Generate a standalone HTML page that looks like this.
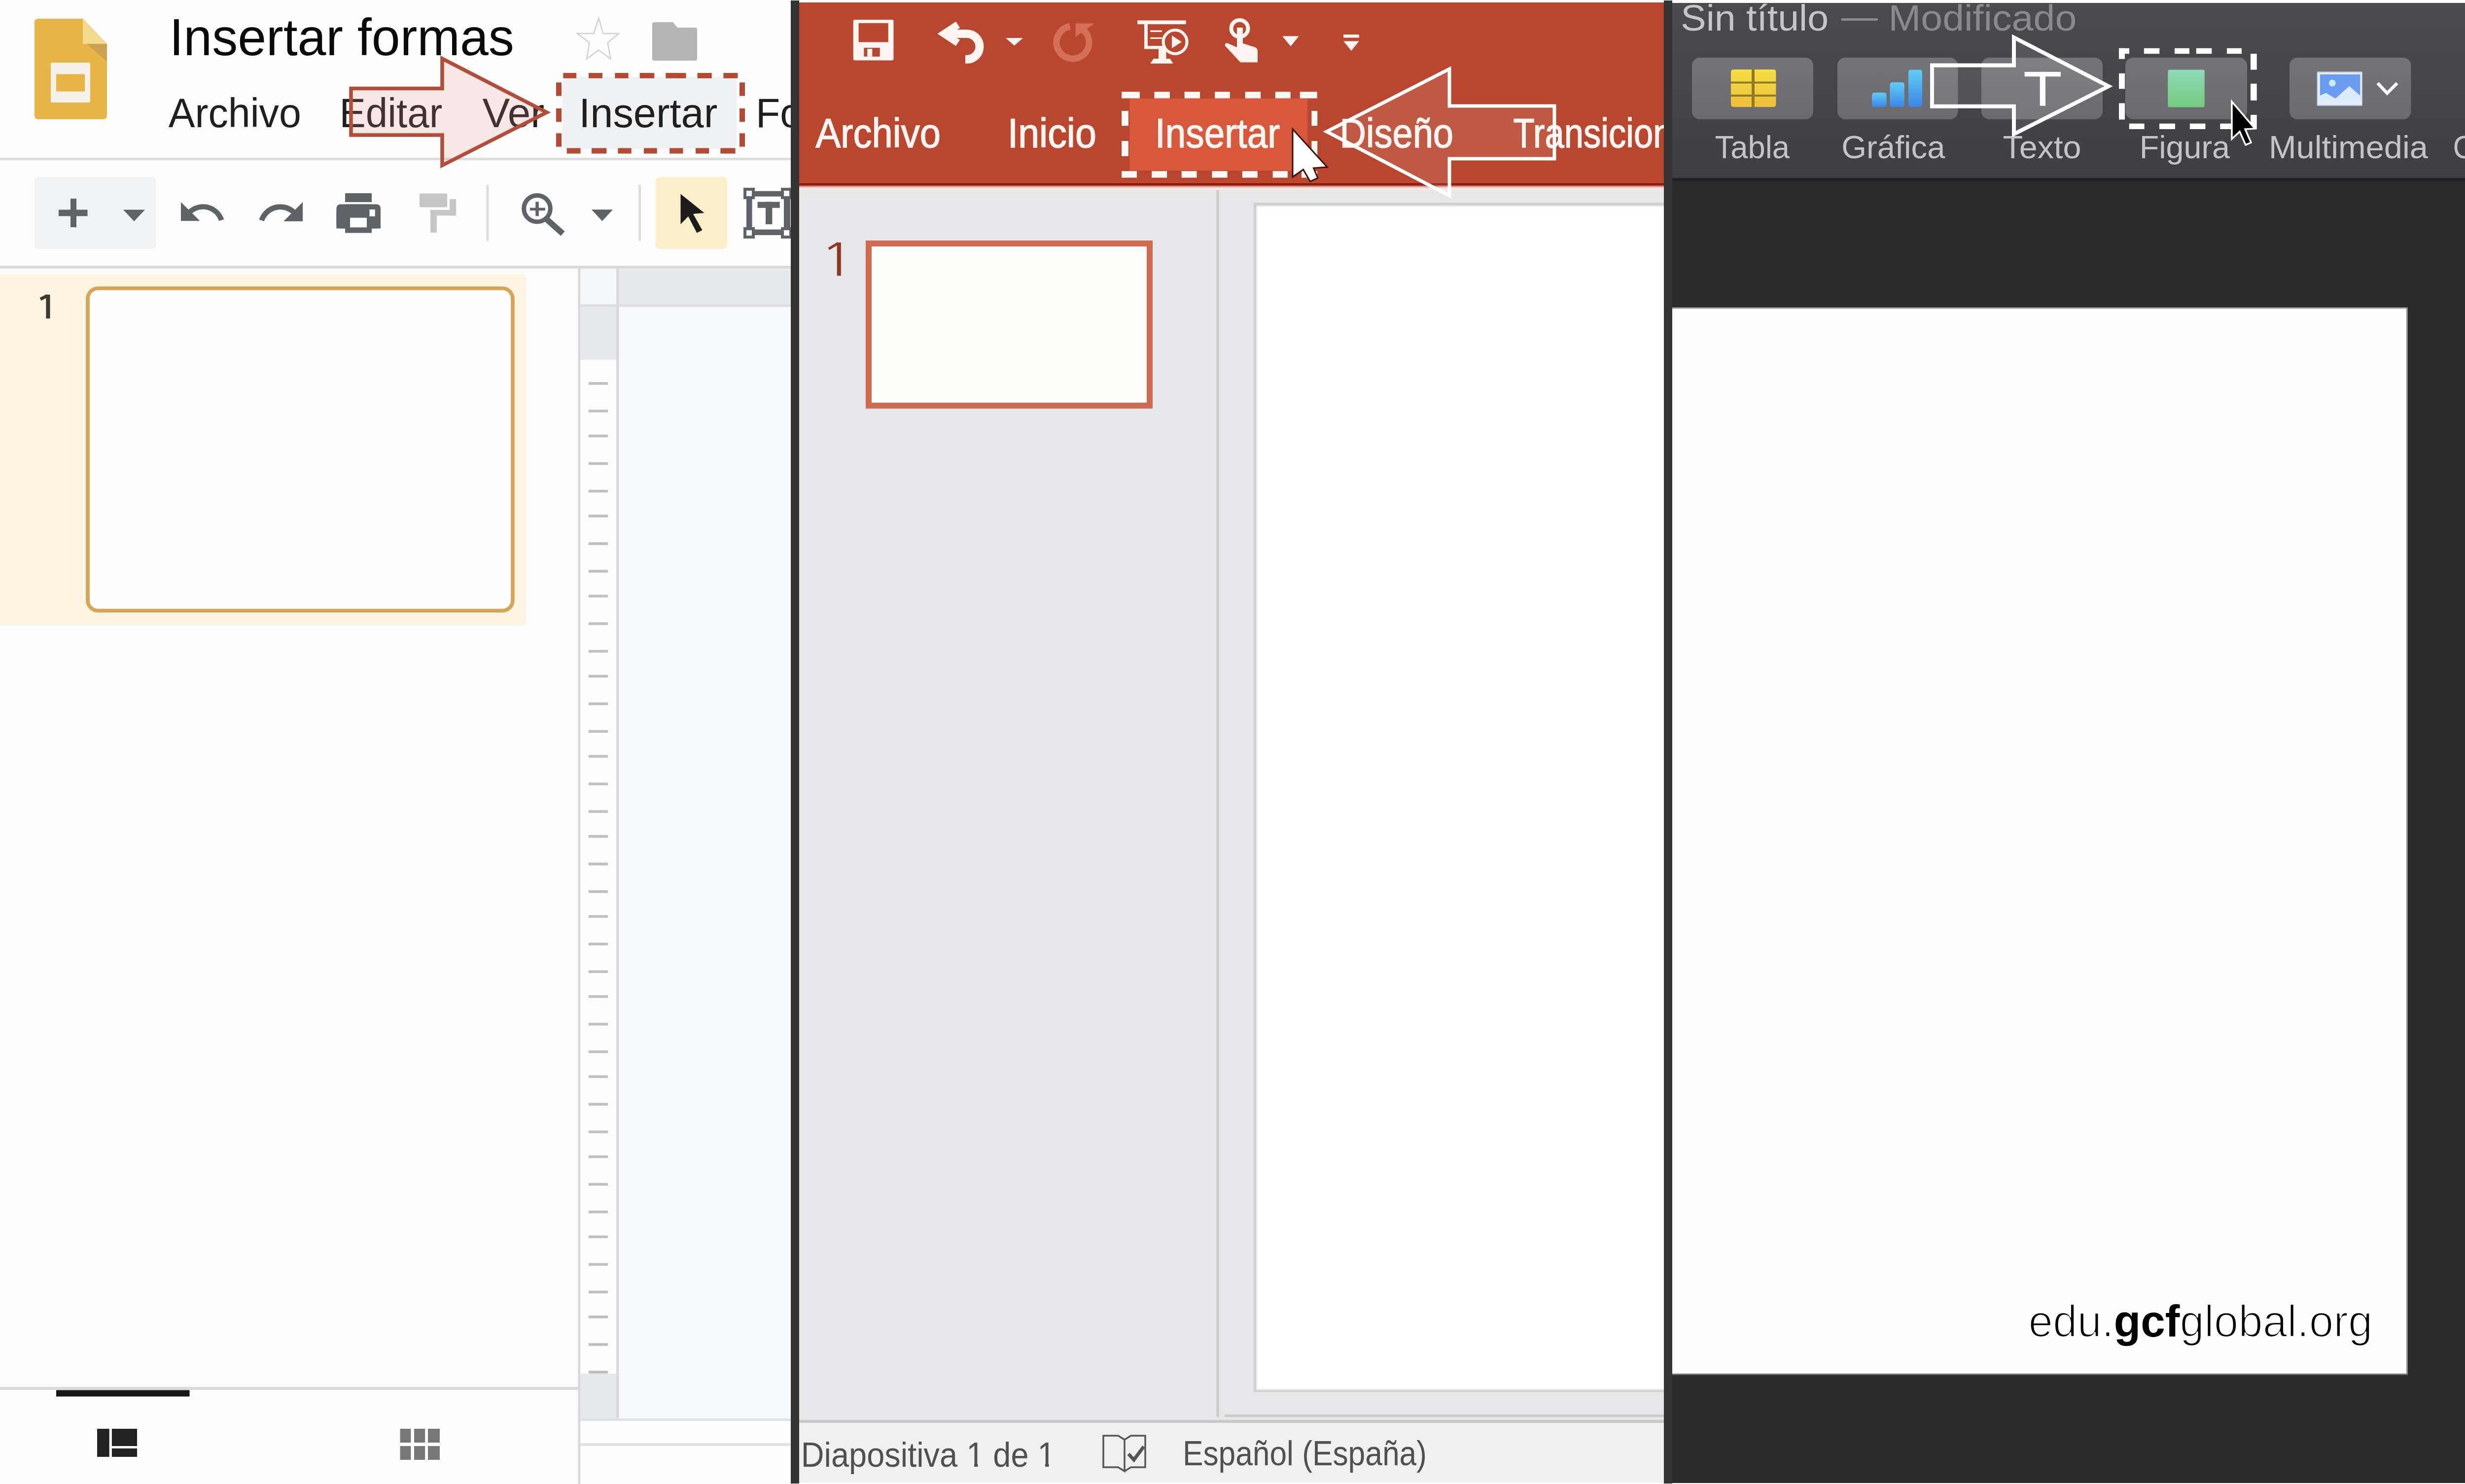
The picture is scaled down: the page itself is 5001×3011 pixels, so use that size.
<!DOCTYPE html>
<html><head><meta charset="utf-8"><style>
html,body{margin:0;padding:0;background:#FDFDFD;overflow:hidden;}
svg{display:block;font-family:"Liberation Sans", sans-serif;}
</style></head><body>
<svg width="5001" height="3011" viewBox="0 0 5001 3011">
<rect x="0" y="0" width="1604" height="3011" fill="#FDFDFD" />
<path d="M78,38 H168 L217,89 V234 Q217,242 209,242 H78 Q70,242 70,234 V46 Q70,38 78,38 Z" fill="#E8B646" />
<polygon points="168,38 217,89 168,89" fill="#F1DA8E" />
<polygon points="176,89 217,89 217,126" fill="#CDA250" />
<rect x="103" y="127" width="80" height="81" fill="#F5F1E8" rx="3" />
<rect x="114" y="150.5" width="58" height="35.0" fill="#E8B646" />
<text x="343.4" y="112" font-size="106" fill="#0A0A0A" font-weight="normal" textLength="699.4" lengthAdjust="spacingAndGlyphs" >Insertar formas</text>
<polygon points="1214.5,37 1223.3,68 1255,68 1232.6,86.5 1238.5,119.5 1214.5,101.5 1190,119.5 1195.5,86.5 1171,68 1204.4,68" fill="none" stroke="#D2D2D2" stroke-width="2.6" stroke-linejoin="miter"/>
<path d="M1327,45 H1365 L1374,56 H1410 Q1414,56 1414,60 V119 Q1414,123 1410,123 H1327 Q1323,123 1323,119 V49 Q1323,45 1327,45 Z" fill="#B5B5B5" />
<rect x="1141" y="156" width="353.6" height="146.5" fill="#F0F1F3" rx="12" />
<text x="341.8" y="258" font-size="84.3" fill="#1F1F1F" font-weight="normal" textLength="269.0" lengthAdjust="spacingAndGlyphs" >Archivo</text>
<text x="688.4" y="258" font-size="84.3" fill="#1F1F1F" font-weight="normal" textLength="208.9" lengthAdjust="spacingAndGlyphs" >Editar</text>
<text x="1174.3" y="258" font-size="84.3" fill="#1F1F1F" font-weight="normal" textLength="281.0" lengthAdjust="spacingAndGlyphs" >Insertar</text>
<text x="978.6" y="258" font-size="84.3" fill="#1F1F1F" font-weight="normal" textLength="125.6" lengthAdjust="spacingAndGlyphs" >Ver</text>
<text x="1532.9" y="258" font-size="84.3" fill="#1F1F1F" font-weight="normal" textLength="300.4" lengthAdjust="spacingAndGlyphs" >Formato</text>
<rect x="0" y="320" width="1604" height="5" fill="#DCDCDF" />
<polygon points="712,179.5 897,179.5 897,119 1109,228 897,335.5 897,274 712,274" fill="rgba(220,140,125,0.18)" stroke="#B14E39" stroke-width="7.5" stroke-linejoin="miter"/>
<rect x="1142.4" y="148" width="26.7" height="10.8" fill="#B44A34" />
<rect x="1194" y="148" width="28" height="10.8" fill="#B44A34" />
<rect x="1247.3" y="148" width="27.3" height="10.8" fill="#B44A34" />
<rect x="1297.7" y="148" width="29.6" height="10.8" fill="#B44A34" />
<rect x="1350.3" y="148" width="41.3" height="10.8" fill="#B44A34" />
<rect x="1414.6" y="148" width="29.1" height="10.8" fill="#B44A34" />
<rect x="1467.4" y="148" width="29.1" height="10.8" fill="#B44A34" />
<rect x="1149.7" y="300.5" width="27.9" height="11.1" fill="#B44A34" />
<rect x="1200" y="300.5" width="30.4" height="11.1" fill="#B44A34" />
<rect x="1253.4" y="300.5" width="27.3" height="11.1" fill="#B44A34" />
<rect x="1306" y="300.5" width="26.7" height="11.1" fill="#B44A34" />
<rect x="1358.2" y="300.5" width="27.3" height="11.1" fill="#B44A34" />
<rect x="1411" y="300.5" width="27.3" height="11.1" fill="#B44A34" />
<rect x="1461.3" y="300.5" width="30.3" height="11.1" fill="#B44A34" />
<rect x="1128" y="167.3" width="11" height="27.3" fill="#B44A34" />
<rect x="1500" y="167.3" width="11" height="27.3" fill="#B44A34" />
<rect x="1128" y="220" width="11" height="27.3" fill="#B44A34" />
<rect x="1500" y="220" width="11" height="27.3" fill="#B44A34" />
<rect x="1128" y="270.4" width="11" height="27.3" fill="#B44A34" />
<rect x="1500" y="270.4" width="11" height="27.3" fill="#B44A34" />
<rect x="70" y="359" width="246" height="146" fill="#F0F2F4" rx="7" />
<rect x="143" y="403" width="12" height="58" fill="#5F6368" />
<rect x="119" y="425.5" width="58.5" height="13.0" fill="#5F6368" />
<polygon points="250,425.5 294,425.5 272,449" fill="#5F6368" />
<g transform="translate(358.4,380) scale(4.27)"><path d="M12.5 8c-2.65 0-5.05.99-6.9 2.6L2 7v9h9l-3.62-3.62c1.39-1.16 3.16-1.88 5.12-1.88 3.54 0 6.55 2.31 7.6 5.5l2.37-.78C21.08 11.03 17.15 8 12.5 8z" fill="#5F6368"/></g>
<g transform="translate(518.9,379.7) scale(4.33)"><path d="M18.4 10.6C16.55 8.99 14.15 8 11.5 8c-4.65 0-8.58 3.03-9.960 7.22L3.9 16c1.05-3.19 4.05-5.5 7.6-5.5 1.95 0 3.730.72 5.12 1.88L13 16h9V7l-3.6 3.6z" fill="#5F6368"/></g>
<rect x="682.4" y="414.5" width="89.6" height="49.0" fill="#5F6368" rx="8" />
<rect x="682.4" y="430" width="89.6" height="33.5" fill="#5F6368" />
<rect x="700" y="414.5" width="54" height="58.1" fill="#5F6368" />
<rect x="700" y="392" width="54" height="18" fill="#5F6368" />
<rect x="710" y="441.8" width="34" height="19.6" fill="#FDFDFD" />
<rect x="749.5" y="425" width="11.2" height="14" fill="#FDFDFD" />
<rect x="912" y="404" width="13" height="33.4" fill="#C6C6C6" />
<rect x="873" y="426" width="52" height="11.4" fill="#C6C6C6" />
<rect x="873" y="426" width="13" height="46" fill="#C6C6C6" />
<rect x="851" y="392.6" width="56.2" height="28.0" fill="#C6C6C6" rx="3" />
<rect x="907.2" y="404" width="4.8" height="22" fill="#FDFDFD" />
<rect x="986.5" y="375" width="5.0" height="113.7" fill="#DADCE0" />
<rect x="1295" y="375" width="5" height="113.7" fill="#DADCE0" />
<circle cx="1089.5" cy="423.2" r="26.8" fill="none" stroke="#5F6368" stroke-width="9"/>
<rect x="1075" y="421.6" width="30.8" height="5.6" fill="#5F6368" />
<rect x="1086.3" y="409.4" width="6.5" height="29.0" fill="#5F6368" />
<line x1="1110" y1="446" x2="1137" y2="470" stroke="#5F6368" stroke-width="12" stroke-linecap="square"/>
<polygon points="1200,425.3 1243,425.3 1221.5,448.6" fill="#5F6368" />
<rect x="1330" y="359" width="144.5" height="146" fill="#FBEFCA" rx="8" />
<polygon points="1380.5,393.5 1428.5,432 1406,434 1424.5,467 1413.5,472.5 1396,439 1380.5,455" fill="#1C1C1C" />
<rect x="1514" y="387.7" width="89" height="11.0" fill="#5F6368" />
<rect x="1514" y="465.6" width="89" height="11.4" fill="#5F6368" />
<rect x="1514" y="387.7" width="11.6" height="89.3" fill="#5F6368" />
<rect x="1590" y="387.7" width="13" height="89.3" fill="#5F6368" />
<rect x="1508" y="381" width="23" height="23" fill="#5F6368" />
<rect x="1514" y="387" width="11" height="11" fill="#FDFDFD" />
<rect x="1508" y="461" width="23" height="23" fill="#5F6368" />
<rect x="1514" y="467" width="11" height="11" fill="#FDFDFD" />
<rect x="1584" y="381" width="23" height="23" fill="#5F6368" />
<rect x="1590" y="387" width="11" height="11" fill="#FDFDFD" />
<rect x="1584" y="461" width="23" height="23" fill="#5F6368" />
<rect x="1590" y="467" width="11" height="11" fill="#FDFDFD" />
<rect x="1536.6" y="409.6" width="45.1" height="12.2" fill="#5F6368" />
<rect x="1553" y="409.6" width="13.4" height="45.4" fill="#5F6368" />
<rect x="0" y="539" width="1604" height="6" fill="#DADADD" />
<path d="M0,556 H1056 Q1068,556 1068,568 V1257 Q1068,1269 1056,1269 H0 Z" fill="#FDF5E1" />
<rect x="178" y="585" width="862" height="654" rx="21" fill="#FEFEFE" stroke="#D4A658" stroke-width="7.7"/>
<rect x="93.4" y="597.8" width="8.1" height="48.5" fill="#3E3A30" />
<path d="M82,607 L96,600" stroke="#3E3A30" stroke-width="6.5" fill="none"/>
<rect x="1172.4" y="545" width="5.2" height="2466" fill="#D8D8DA" />
<rect x="1177.6" y="545" width="72.4" height="2335" fill="#FEFEFE" />
<rect x="1177.6" y="545" width="72.4" height="72.5" fill="#F6F7F9" />
<rect x="1177.6" y="622.7" width="72.4" height="107.3" fill="#E7E8EB" />
<rect x="1177.6" y="2787" width="72.4" height="91" fill="#E7E8EB" />
<rect x="1250" y="545" width="5.7" height="2333" fill="#D9D9DC" />
<rect x="1255.7" y="545" width="348.3" height="72.5" fill="#E8E9EC" />
<rect x="1177.6" y="617.5" width="426.4" height="5.2" fill="#DCDCDE" />
<rect x="1255.7" y="622.7" width="348.3" height="2255.3" fill="#F8F9FA" />
<rect x="1193.8" y="775.2" width="39.2" height="5.6" fill="#BFC0C1" />
<rect x="1193.8" y="831.2" width="39.2" height="5.6" fill="#BFC0C1" />
<rect x="1193.8" y="881.7" width="39.2" height="5.6" fill="#BFC0C1" />
<rect x="1193.8" y="937.7" width="39.2" height="5.6" fill="#BFC0C1" />
<rect x="1193.8" y="993.7" width="39.2" height="5.6" fill="#BFC0C1" />
<rect x="1193.8" y="1044.2" width="39.2" height="5.6" fill="#BFC0C1" />
<rect x="1193.8" y="1100.2" width="39.2" height="5.6" fill="#BFC0C1" />
<rect x="1193.8" y="1156.2" width="39.2" height="5.6" fill="#BFC0C1" />
<rect x="1193.8" y="1206.7" width="39.2" height="5.6" fill="#BFC0C1" />
<rect x="1193.8" y="1262.7" width="39.2" height="5.6" fill="#BFC0C1" />
<rect x="1193.8" y="1318.7" width="39.2" height="5.6" fill="#BFC0C1" />
<rect x="1193.8" y="1369.2" width="39.2" height="5.6" fill="#BFC0C1" />
<rect x="1193.8" y="1425.2" width="39.2" height="5.6" fill="#BFC0C1" />
<rect x="1193.8" y="1481.2" width="39.2" height="5.6" fill="#BFC0C1" />
<rect x="1193.8" y="1531.7" width="39.2" height="5.6" fill="#BFC0C1" />
<rect x="1193.8" y="1587.7" width="39.2" height="5.6" fill="#BFC0C1" />
<rect x="1193.8" y="1643.7" width="39.2" height="5.6" fill="#BFC0C1" />
<rect x="1193.8" y="1694.2" width="39.2" height="5.6" fill="#BFC0C1" />
<rect x="1193.8" y="1750.2" width="39.2" height="5.6" fill="#BFC0C1" />
<rect x="1193.8" y="1806.2" width="39.2" height="5.6" fill="#BFC0C1" />
<rect x="1193.8" y="1856.7" width="39.2" height="5.6" fill="#BFC0C1" />
<rect x="1193.8" y="1912.7" width="39.2" height="5.6" fill="#BFC0C1" />
<rect x="1193.8" y="1968.7" width="39.2" height="5.6" fill="#BFC0C1" />
<rect x="1193.8" y="2019.2" width="39.2" height="5.6" fill="#BFC0C1" />
<rect x="1193.8" y="2075.2" width="39.2" height="5.6" fill="#BFC0C1" />
<rect x="1193.8" y="2131.2" width="39.2" height="5.6" fill="#BFC0C1" />
<rect x="1193.8" y="2181.7" width="39.2" height="5.6" fill="#BFC0C1" />
<rect x="1193.8" y="2237.7" width="39.2" height="5.6" fill="#BFC0C1" />
<rect x="1193.8" y="2293.7" width="39.2" height="5.6" fill="#BFC0C1" />
<rect x="1193.8" y="2344.2" width="39.2" height="5.6" fill="#BFC0C1" />
<rect x="1193.8" y="2400.2" width="39.2" height="5.6" fill="#BFC0C1" />
<rect x="1193.8" y="2456.2" width="39.2" height="5.6" fill="#BFC0C1" />
<rect x="1193.8" y="2506.7" width="39.2" height="5.6" fill="#BFC0C1" />
<rect x="1193.8" y="2562.7" width="39.2" height="5.6" fill="#BFC0C1" />
<rect x="1193.8" y="2618.7" width="39.2" height="5.6" fill="#BFC0C1" />
<rect x="1193.8" y="2669.2" width="39.2" height="5.6" fill="#BFC0C1" />
<rect x="1193.8" y="2725.2" width="39.2" height="5.6" fill="#BFC0C1" />
<rect x="1193.8" y="2781.2" width="39.2" height="5.6" fill="#BFC0C1" />
<rect x="0" y="2814" width="1172" height="6" fill="#D9D9D9" />
<rect x="114" y="2820.5" width="270.5" height="13.0" fill="#151515" />
<rect x="197" y="2899" width="24.7" height="56.9" fill="#222222" />
<rect x="226.9" y="2899" width="51.1" height="35" fill="#222222" />
<rect x="226.9" y="2938.8" width="51.1" height="17.1" fill="#222222" />
<rect x="811.6" y="2899" width="21.7" height="28" fill="#777777" />
<rect x="811.6" y="2934" width="21.7" height="28" fill="#777777" />
<rect x="840" y="2899" width="22.2" height="28" fill="#777777" />
<rect x="840" y="2934" width="22.2" height="28" fill="#777777" />
<rect x="868" y="2899" width="24" height="28" fill="#777777" />
<rect x="868" y="2934" width="24" height="28" fill="#777777" />
<rect x="1177.6" y="2878" width="426.4" height="5.3" fill="#E0E1E2" />
<rect x="1177.6" y="2927.8" width="426.4" height="6.1" fill="#E2E2E2" />
<rect x="1177.6" y="2883.3" width="426.4" height="44.5" fill="#FEFEFE" />
<rect x="1177.6" y="2933.9" width="426.4" height="77.1" fill="#FEFEFE" />
<rect x="1604" y="1" width="17" height="3009" fill="#333333" />
<rect x="1621" y="0" width="1754" height="3011" fill="#FDFDFD" />
<rect x="1621" y="5" width="1754" height="367" fill="#B9472F" />
<rect x="1621" y="367" width="1754" height="5" fill="#C14629" />
<rect x="1621" y="378" width="1754" height="2506" fill="#E7E6E8" />
<rect x="1621" y="372" width="1754" height="3" fill="#841203" />
<rect x="1621" y="375" width="1754" height="3" fill="#A84F48" />
<rect x="1621" y="378" width="1754" height="3" fill="#F0B8B0" />
<rect x="1621" y="381" width="1754" height="3" fill="#FBE6E2" />
<rect x="1621" y="384" width="1754" height="4" fill="#EEE7E7" />
<rect x="1621" y="2881" width="1754" height="6" fill="#C9C9C9" />
<rect x="1621" y="2887" width="1754" height="121" fill="#F0F0F0" />
<rect x="1730.8" y="40" width="81.7" height="82.5" fill="#FFF4EF" rx="3" />
<rect x="1741.6" y="47" width="60.1" height="38.5" fill="#B9472F" />
<rect x="1752.4" y="97" width="32.3" height="17.8" fill="#B9472F" />
<rect x="1759.3" y="99" width="10.0" height="15.8" fill="#FFF4EF" />
<path d="M1925,68.5 H1961 A26,26 0 0 1 1961,120.5 H1958" fill="none" stroke="#FFF4EF" stroke-width="17"/>
<path d="M1943,50 L1915,68.5 L1943,87" fill="none" stroke="#FFF4EF" stroke-width="15" stroke-linejoin="miter" stroke-miterlimit="10"/>
<polygon points="2039.7,77 2075.2,77 2057.5,92.4" fill="#FFF4EF" />
<path d="M2170.3,53.5 A33,33 0 1 0 2197.2,60.7" fill="none" stroke="#D66F58" stroke-width="13"/>
<polygon points="2181.5,47.4 2220,47.4 2181.5,75" fill="#D66F58" />
<rect x="2307" y="41.4" width="98.7" height="7.8" fill="#FFF4EF" />
<rect x="2321" y="49" width="7" height="50" fill="#FFF4EF" />
<rect x="2321" y="93" width="41" height="6.5" fill="#FFF4EF" />
<rect x="2333" y="61.5" width="24" height="3.5" fill="#FFF4EF" />
<rect x="2333" y="75.8" width="24" height="3.2" fill="#FFF4EF" />
<circle cx="2383.6" cy="85" r="24" fill="none" stroke="#FFF4EF" stroke-width="6"/>
<polygon points="2377,72 2377,98 2397,85" fill="#FFF4EF" />
<rect x="2350" y="99" width="15.5" height="20" fill="#FFF4EF" />
<polygon points="2340,119 2373,119 2380,129 2333,129" fill="#FFF4EF" />
<circle cx="2514.5" cy="57.7" r="17" fill="none" stroke="#FFF4EF" stroke-width="8"/>
<path d="M2509,56 H2521 V88 L2546,96 Q2551,98 2551,104 V126.5 H2516 L2485,93 Q2483,87.5 2490,87.5 L2509,96 Z" fill="#FFF4EF" />
<polygon points="2601,73.2 2634.7,73.2 2618,94" fill="#FFF4EF" />
<rect x="2725" y="70" width="31.7" height="6.5" fill="#FFF4EF" />
<polygon points="2725,83.6 2756.7,83.6 2741,103" fill="#FFF4EF" />
<rect x="2291" y="200" width="361" height="146" fill="#D8583C" />
<text x="1654.6" y="299" font-size="84.3" fill="#FFF4EF" font-weight="normal" textLength="253.4" lengthAdjust="spacingAndGlyphs" stroke="#FFF4EF" stroke-width="1.6">Archivo</text>
<text x="2043.7" y="299" font-size="84.3" fill="#FFF4EF" font-weight="normal" textLength="180.2" lengthAdjust="spacingAndGlyphs" stroke="#FFF4EF" stroke-width="1.6">Inicio</text>
<text x="2343.1" y="299" font-size="84.3" fill="#FFF4EF" font-weight="normal" textLength="253.1" lengthAdjust="spacingAndGlyphs" stroke="#FFF4EF" stroke-width="1.6">Insertar</text>
<text x="2717.4" y="299" font-size="84.3" fill="#FFF4EF" font-weight="normal" textLength="230.7" lengthAdjust="spacingAndGlyphs" stroke="#FFF4EF" stroke-width="1.6">Diseño</text>
<text x="3069.4" y="299" font-size="84.3" fill="#FFF4EF" font-weight="normal" textLength="397.6" lengthAdjust="spacingAndGlyphs" stroke="#FFF4EF" stroke-width="1.6">Transiciones</text>
<rect x="2275.1" y="186.2" width="36.8" height="13.3" fill="#FFF8F5" />
<rect x="2341.5" y="186.2" width="31.5" height="13.3" fill="#FFF8F5" />
<rect x="2402.6" y="186.2" width="31.5" height="13.3" fill="#FFF8F5" />
<rect x="2464.3" y="186.2" width="30.5" height="13.3" fill="#FFF8F5" />
<rect x="2525.7" y="186.2" width="31.5" height="13.3" fill="#FFF8F5" />
<rect x="2586.8" y="186.2" width="30.9" height="13.3" fill="#FFF8F5" />
<rect x="2636.7" y="186.2" width="34.9" height="13.3" fill="#FFF8F5" />
<rect x="2275.1" y="347.1" width="30.9" height="13.4" fill="#FFF8F5" />
<rect x="2336.2" y="347.1" width="30.9" height="13.4" fill="#FFF8F5" />
<rect x="2396.7" y="347.1" width="30.8" height="13.4" fill="#FFF8F5" />
<rect x="2458.4" y="347.1" width="31.2" height="13.4" fill="#FFF8F5" />
<rect x="2519.8" y="347.1" width="30.9" height="13.4" fill="#FFF8F5" />
<rect x="2581.6" y="347.1" width="30.2" height="13.4" fill="#FFF8F5" />
<rect x="2640" y="347.1" width="32" height="13.4" fill="#FFF8F5" />
<rect x="2275.1" y="225" width="13.8" height="30.2" fill="#FFF8F5" />
<rect x="2660.4" y="225" width="11.8" height="30.2" fill="#FFF8F5" />
<rect x="2275.1" y="286" width="13.8" height="31" fill="#FFF8F5" />
<rect x="2660.4" y="286" width="11.8" height="31" fill="#FFF8F5" />
<polygon points="2691,267 2940,140 2940,215 3153,215 3153,322 2940,322 2940,397" fill="rgba(255,255,255,0.10)" stroke="#FFFFFF" stroke-width="7" stroke-linejoin="miter"/>
<polygon points="2622,262 2622,359 2643.5,344 2657.5,368 2673,361 2664.5,341 2692,339" fill="#FFFFFF" stroke="#3A1208" stroke-width="3"/>
<rect x="1762" y="494" width="570" height="329" fill="#FEFEFD" stroke="#D06B52" stroke-width="12"/>
<rect x="1697.7" y="492" width="8.1" height="67.5" fill="#8A3A26" />
<path d="M1681,505 L1700,493.5" stroke="#8A3A26" stroke-width="5.5" fill="none"/>
<rect x="2467.3" y="386" width="5.2" height="2488.6" fill="#CBCBCB" />
<rect x="2543" y="411" width="832" height="2413.5" fill="#D0D0D0" />
<rect x="2548" y="417" width="827" height="2403.5" fill="#EEEEEE" />
<rect x="2550.5" y="420" width="824.5" height="2397.5" fill="#FFFFFF" />
<rect x="2484" y="2870" width="891" height="5" fill="#CACACA" />
<text x="1624.7" y="2976" font-size="71" fill="#505050" font-weight="normal" textLength="516.0" lengthAdjust="spacingAndGlyphs" >Diapositiva 1 de 1</text>
<rect x="1964" y="2969.5" width="12" height="7.0" fill="#F0F0F0" />
<rect x="1983.5" y="2969.5" width="10.5" height="7.0" fill="#F0F0F0" />
<rect x="2108" y="2969.5" width="12" height="7.0" fill="#F0F0F0" />
<rect x="2127.5" y="2969.5" width="10.5" height="7.0" fill="#F0F0F0" />
<text x="2398.9" y="2973" font-size="71" fill="#505050" font-weight="normal" textLength="495.0" lengthAdjust="spacingAndGlyphs" >Español (España)</text>
<path d="M2238,2913 H2268 L2281,2921 V2985 L2268,2977 H2238 Z M2281,2921 L2294,2913 H2323 V2977 H2294 L2281,2985" fill="none" stroke="#555" stroke-width="3.5"/>
<path d="M2289,2950 L2300,2962 L2320,2935" fill="none" stroke="#555" stroke-width="7"/>
<rect x="3375" y="1" width="17" height="3009" fill="#333333" />
<rect x="3392" y="0" width="1609" height="3011" fill="#FDFDFD" />
<defs><linearGradient id="khdr" x1="0" y1="0" x2="0" y2="1"><stop offset="0" stop-color="#4B4A4E"/><stop offset="1" stop-color="#3F3E42"/></linearGradient><linearGradient id="kbtn" x1="0" y1="0" x2="0" y2="1"><stop offset="0" stop-color="#747377"/><stop offset="1" stop-color="#6B6A6E"/></linearGradient><linearGradient id="kyel" x1="0" y1="0" x2="0" y2="1"><stop offset="0" stop-color="#F5DF45"/><stop offset="1" stop-color="#EDBE3A"/></linearGradient><linearGradient id="kblue" x1="0" y1="0" x2="0" y2="1"><stop offset="0" stop-color="#62CDF6"/><stop offset="1" stop-color="#3B86E6"/></linearGradient><linearGradient id="kgreen" x1="0" y1="0" x2="0" y2="1"><stop offset="0" stop-color="#8FD9BA"/><stop offset="1" stop-color="#73CC7D"/></linearGradient></defs>
<rect x="3392" y="6" width="1609" height="355" fill="url(#khdr)" />
<rect x="3392" y="359.6" width="1609" height="2.1" fill="#353336" />
<rect x="3392" y="361.7" width="1609" height="3.0" fill="#0B0B0B" />
<rect x="3392" y="364.7" width="1609" height="2644.3" fill="#2A2A2A" />
<rect x="3392" y="364.7" width="1609" height="3.0" fill="#1F1F1F" />
<rect x="3392" y="627" width="1489" height="2160" fill="#FEFEFE" />
<rect x="3392" y="623.8" width="1492" height="3.2" fill="#B5B5B5" />
<rect x="4881" y="623.8" width="3" height="2166.2" fill="#8F8F8F" />
<rect x="3392" y="2787" width="1492" height="3" fill="#6E6E6E" />
<text x="3409.3" y="62" font-size="75" fill="#C6C5CA" font-weight="normal" textLength="299.8" lengthAdjust="spacingAndGlyphs" >Sin título</text>
<rect x="3735" y="37" width="74" height="5" fill="#8A898E" />
<text x="3830.5" y="62" font-size="75" fill="#8A898E" font-weight="normal" textLength="381.8" lengthAdjust="spacingAndGlyphs" >Modificado</text>
<rect x="3432" y="117" width="246" height="125" fill="url(#kbtn)" rx="16" />
<rect x="3727" y="117" width="244.5" height="125" fill="url(#kbtn)" rx="16" />
<rect x="4019" y="117" width="246" height="125" fill="url(#kbtn)" rx="16" />
<rect x="4311" y="117" width="247" height="125" fill="url(#kbtn)" rx="16" />
<rect x="4644" y="117" width="246.5" height="125" fill="url(#kbtn)" rx="16" />
<rect x="3511" y="141" width="91.4" height="76" fill="url(#kyel)" rx="5" />
<rect x="3553" y="141" width="6" height="76" fill="#8E7A28" />
<rect x="3511" y="165.5" width="91.4" height="4.0" fill="#8E7A28" />
<rect x="3511" y="192" width="91.4" height="4" fill="#8E7A28" />
<rect x="3797" y="188" width="29.6" height="29" fill="url(#kblue)" rx="5" />
<rect x="3833.4" y="167" width="29.4" height="50" fill="url(#kblue)" rx="5" />
<rect x="3871" y="141.4" width="28" height="75.6" fill="url(#kblue)" rx="5" />
<rect x="4106.6" y="145.8" width="73.4" height="9.5" fill="#FFFFFF" />
<rect x="4137.7" y="145.8" width="11.3" height="68.9" fill="#FFFFFF" />
<rect x="4397.3" y="141.5" width="74.4" height="76.0" fill="url(#kgreen)" rx="4" />
<rect x="4699.5" y="145" width="92.5" height="70" fill="#B8C2CC" rx="2" />
<rect x="4701" y="147" width="89.5" height="66" fill="#E4EDFB" />
<rect x="4706" y="151" width="81.3" height="54" fill="#6A9DF2" />
<polygon points="4706,205 4706,194 4718,188.5 4737,200 4765.4,174.7 4787.3,194 4787.3,205" fill="#DEEBFB" />
<circle cx="4730.8" cy="168.6" r="7" fill="#CBEAFA"/>
<path d="M4825,171 L4842,189 L4860,171" fill="none" stroke="#FFFFFF" stroke-width="6.5" stroke-linecap="square"/>
<text x="3478.6" y="321" font-size="65" fill="#C4C3C8" font-weight="normal" textLength="151.4" lengthAdjust="spacingAndGlyphs" >Tabla</text>
<text x="3735.3" y="321" font-size="65" fill="#C4C3C8" font-weight="normal" textLength="210.2" lengthAdjust="spacingAndGlyphs" >Gráfica</text>
<text x="4062.6" y="321" font-size="65" fill="#C4C3C8" font-weight="normal" textLength="159.0" lengthAdjust="spacingAndGlyphs" >Texto</text>
<text x="4339.7" y="321" font-size="65" fill="#C4C3C8" font-weight="normal" textLength="183.3" lengthAdjust="spacingAndGlyphs" >Figura</text>
<text x="4601.9" y="321" font-size="65" fill="#C4C3C8" font-weight="normal" textLength="323.1" lengthAdjust="spacingAndGlyphs" >Multimedia</text>
<text x="4975.5" y="321" font-size="65" fill="#C4C3C8" font-weight="normal" textLength="312.8" lengthAdjust="spacingAndGlyphs" >Comentario</text>
<polygon points="3919,132.6 4085,132.6 4085,76 4277,175 4085,272 4085,215.7 3919,215.7" fill="rgba(255,255,255,0.08)" stroke="#FFFFFF" stroke-width="8" stroke-linejoin="miter"/>
<rect x="4298" y="97.8" width="21" height="11.3" fill="#FFFFFF" />
<rect x="4298" y="97.8" width="12" height="21.8" fill="#FFFFFF" />
<rect x="4348.8" y="97.8" width="31.5" height="11.3" fill="#FFFFFF" />
<rect x="4411" y="97.8" width="30" height="11.3" fill="#FFFFFF" />
<rect x="4454.8" y="97.8" width="31.5" height="11.3" fill="#FFFFFF" />
<rect x="4517" y="97.8" width="30" height="11.3" fill="#FFFFFF" />
<rect x="4298" y="148.8" width="12" height="31.5" fill="#FFFFFF" />
<rect x="4298" y="209.4" width="12" height="33.2" fill="#FFFFFF" />
<rect x="4565" y="109" width="12.7" height="32.5" fill="#FFFFFF" />
<rect x="4565" y="169.8" width="12.7" height="34.0" fill="#FFFFFF" />
<rect x="4565" y="233" width="12.7" height="29" fill="#FFFFFF" />
<rect x="4318.8" y="250.7" width="30.8" height="11.3" fill="#FFFFFF" />
<rect x="4380" y="250.7" width="32" height="11.3" fill="#FFFFFF" />
<rect x="4441.8" y="250.7" width="31.6" height="11.3" fill="#FFFFFF" />
<rect x="4503.3" y="250.7" width="30.7" height="11.3" fill="#FFFFFF" />
<polygon points="4527,206 4527,282 4543,267 4555,294 4566,289 4554,262 4574,261" fill="#000000" stroke="#FFFFFF" stroke-width="3.5" stroke-linejoin="miter"/>
<text x="4114.5" y="2712" font-size="90" fill="#000000" stroke="#FEFEFE" stroke-width="2.6" textLength="698" lengthAdjust="spacingAndGlyphs">edu.<tspan font-weight="bold" stroke="none">gcf</tspan>global.org</text>
</svg>
</body></html>
